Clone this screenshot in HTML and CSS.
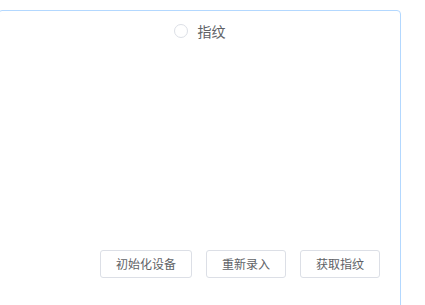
FILE: index.html
```html
<!DOCTYPE html>
<html>
<head>
<meta charset="utf-8">
<link rel="stylesheet" href="styles.css">
</head>
<body>
<div class="card">
  <div class="radio-row">
    <label class="radio">
      <span class="radio-circle"></span>
      <span class="radio-label">指纹</span>
    </label>
  </div>
  <div class="spacer"></div>
  <div class="actions">
    <button class="btn">初始化设备</button>
    <button class="btn">重新录入</button>
    <button class="btn">获取指纹</button>
  </div>
</div>
</body>
</html>
```
FILE: styles.css
```css
html, body {
  margin: 0;
  padding: 0;
  background: #ffffff;
  font-family: "Noto Sans CJK SC", "Liberation Sans", sans-serif;
  overflow: hidden;
}
.card {
  box-sizing: border-box;
  margin: 10px 0 0 -2px;
  width: 403px;
  height: 300px;
  border: 1px solid #b3d8ff;
  border-radius: 4px;
  padding-top: 10px;
}
.radio-row {
  display: flex;
  justify-content: center;
  height: 20px;
  align-items: center;
}
.radio {
  display: flex;
  align-items: center;
  color: #606266;
  font-size: 14px;
}
.radio-circle {
  box-sizing: border-box;
  width: 14px;
  height: 14px;
  border: 1px solid #dcdfe6;
  border-radius: 50%;
}
.radio-label {
  padding-left: 10px;
  line-height: 20px;
}
.spacer {
  height: 209px;
}
.actions {
  display: flex;
  justify-content: flex-end;
  gap: 14px;
  padding-right: 20px;
}
.btn {
  box-sizing: border-box;
  height: 28px;
  padding: 0 15px;
  font-family: "Noto Sans CJK SC", "Liberation Sans", sans-serif;
  font-size: 12px;
  color: #606266;
  background: #ffffff;
  border: 1px solid #dcdfe6;
  border-radius: 3px;
  line-height: 26px;
}
```
